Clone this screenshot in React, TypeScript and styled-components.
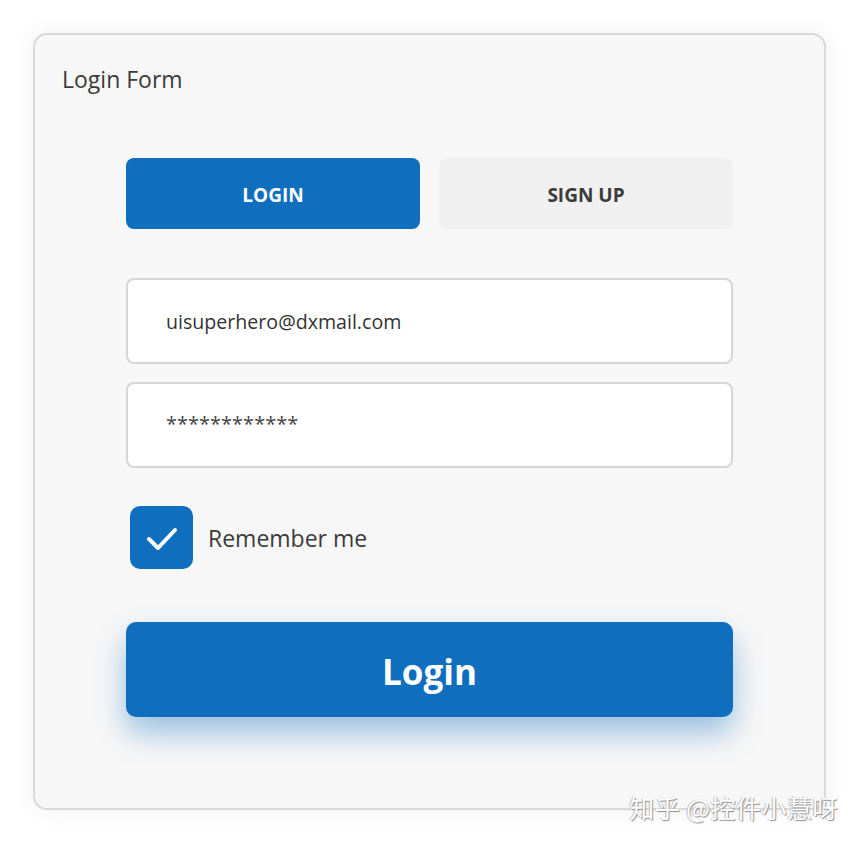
import React from "react";
import styled, { createGlobalStyle } from "styled-components";

const Global = createGlobalStyle`
  html, body { margin: 0; padding: 0; background: #ffffff; }
  body { font-family: "Open Sans", "Noto Sans", "Liberation Sans", sans-serif; }
`;

const Page = styled.div`
  position: relative;
  width: 860px;
  height: 844px;
  padding: 33px 0 0 33px;
  box-sizing: border-box;
`;

const Card = styled.div`
  width: 793px;
  height: 777px;
  box-sizing: border-box;
  background: #f7f7f7;
  border: 2px solid #d9d9d9;
  border-radius: 14px;
  box-shadow: 0 0 22px rgba(0, 0, 0, 0.07);
  padding: 29px 27px 0 27px;
  display: flex;
  flex-direction: column;
`;

const Title = styled.h1`
  margin: 0;
  font-size: 23px;
  line-height: 30px;
  font-weight: 400;
  color: #3b3b3b;
`;

const Body = styled.div`
  padding: 0 64px;
  display: flex;
  flex-direction: column;
`;

const Tabs = styled.div`
  margin-top: 64px;
  display: grid;
  grid-template-columns: 1fr 1fr;
  gap: 19px;
`;

const Tab = styled.div<{ $active?: boolean }>`
  height: 71px;
  border-radius: 8px;
  display: flex;
  align-items: center;
  justify-content: center;
  padding-top: 3px;
  box-sizing: border-box;
  font-size: 19px;
  font-weight: 700;
  background: ${(p) => (p.$active ? "#0f6ebd" : "#f0f0f0")};
  color: ${(p) => (p.$active ? "#ffffff" : "#3b3b3b")};
`;

const Fields = styled.div`
  margin-top: 49px;
  display: flex;
  flex-direction: column;
  gap: 18px;
`;

const Field = styled.div`
  height: 86px;
  box-sizing: border-box;
  border: 2px solid #d6d6d6;
  border-radius: 8px;
  background: #ffffff;
  display: flex;
  align-items: center;
  padding-left: 38px;
  font-size: 19.6px;
  color: #333333;
`;

const Password = styled.span`
  font-size: 20px;
  color: #444444;
  margin-top: -4px;
`;

const CheckRow = styled.div`
  margin-top: 38px;
  margin-left: 4px;
  display: flex;
  align-items: center;
  gap: 15px;
`;

const CheckBox = styled.div`
  width: 63px;
  height: 63px;
  border-radius: 10px;
  background: #0f6ebd;
  display: flex;
  align-items: center;
  justify-content: center;
`;

const CheckLabel = styled.span`
  font-size: 23px;
  color: #3b3b3b;
`;

const LoginButton = styled.button`
  margin-top: 53px;
  height: 95px;
  border: none;
  border-radius: 10px;
  background: #0f6ebd;
  color: #ffffff;
  font-family: inherit;
  font-size: 35px;
  font-weight: 700;
  padding-top: 4px;
  box-shadow: 0 16px 30px rgba(15, 110, 189, 0.4);
  cursor: pointer;
`;

const Watermark = styled.div`
  position: absolute;
  right: 22px;
  bottom: 19px;
  font-family: "Noto Sans CJK SC", sans-serif;
  font-size: 25px;
  color: #ffffff;
  text-shadow: 1px 1px 1px #8f8f8f, -1px 0 1px #bdbdbd;
  letter-spacing: 0.5px;
`;

export default function App() {
  return (
    <>
      <Global />
      <Page>
        <Card>
          <Title>Login Form</Title>
          <Body>
            <Tabs>
              <Tab $active>LOGIN</Tab>
              <Tab>SIGN UP</Tab>
            </Tabs>
            <Fields>
              <Field>uisuperhero@dxmail.com</Field>
              <Field>
                <Password>************</Password>
              </Field>
            </Fields>
            <CheckRow>
              <CheckBox>
                <svg width="63" height="63" viewBox="0 0 63 63">
                  <polyline
                    points="19,33 28,42 45,24"
                    fill="none"
                    stroke="#ffffff"
                    strokeWidth="4"
                    strokeLinecap="round"
                    strokeLinejoin="round"
                  />
                </svg>
              </CheckBox>
              <CheckLabel>Remember me</CheckLabel>
            </CheckRow>
            <LoginButton>Login</LoginButton>
          </Body>
        </Card>
        <Watermark>知乎 @控件小慧呀</Watermark>
      </Page>
    </>
  );
}
